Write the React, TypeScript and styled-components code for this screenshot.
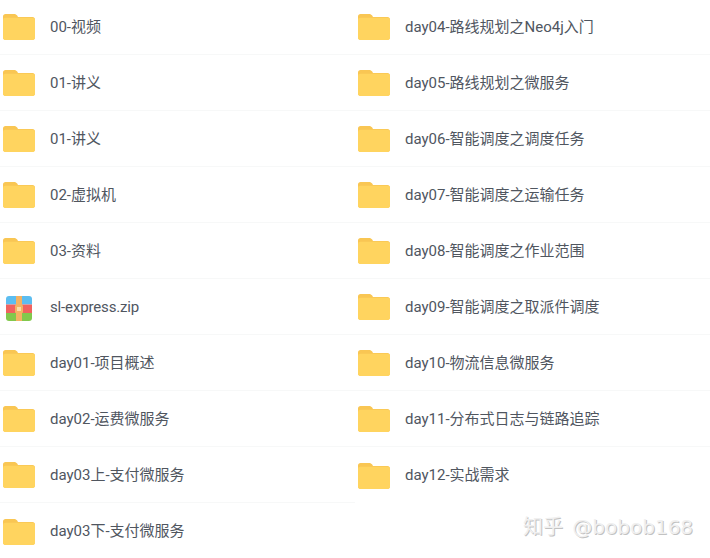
import React from "react";
import styled, { createGlobalStyle } from "styled-components";

const Global = createGlobalStyle`
  html, body { margin: 0; padding: 0; background: #fff; }
  body { width: 710px; height: 558px; overflow: hidden; font-family: Roboto, "Noto Sans CJK SC", sans-serif; }
`;
const Page = styled.div`
  position: relative;
  width: 710px;
  height: 558px;
  display: grid;
  grid-template-columns: 355px 355px;
  background: #fff;
`;
const Column = styled.div`
  display: flex;
  flex-direction: column;
`;
const Row = styled.div`
  height: 55px;
  margin-bottom: 1px;
  box-sizing: border-box;
  display: flex;
  align-items: center;
  border-bottom: 1px solid #f7f8f8;
  padding: 0 0 1px 3px;
  &:last-child { border-bottom: none; }
`;
const IconSlot = styled.div`
  width: 32px;
  height: 27px;
  flex: none;
  margin-right: 15px;
  & > svg { display: block; }
`;
const Label = styled.span<{ $tight?: boolean }>`
  font-size: 15px;
  line-height: 20px;
  color: #50565f;
  white-space: nowrap;
  letter-spacing: ${(p) => (p.$tight ? "-0.15px" : "0")};
`;
const Watermark = styled.div`
  position: absolute;
  left: 523px;
  top: 513px;
  font-size: 20px;
  line-height: 28px;
  word-spacing: 3px;
  font-family: "DejaVu Sans", "Noto Sans CJK SC", sans-serif;
  color: #f0f0f0;
  text-shadow: 1px 1px 0 #c2c2c2;
  white-space: nowrap;
`;

const Folder = () => (
  <svg width="32" height="27" viewBox="0 0 32 27">
    <path d="M0 3.500C0 2 1 1 2.500 1H11c1.500 0 2.400.5 3.200 1.600L15 4h14.500C31 4 32 5 32 6.500V24.500C32 26 31 27 29.500 27H2.500C1 27 0 26 0 24.500Z" fill="#f9c653" />
    <path d="M0 7C0 5.500 1 4.800 2.500 4.800H29.500C31 4.800 32 5.800 32 7V24.500C32 26 31 27 29.500 27H2.500C1 27 0 26 0 24.500Z" fill="#ffd45f" />
  </svg>
);
const Zip = () => (
  <svg width="32" height="28" viewBox="0 0 32 28">
    <g transform="translate(3 3)">
      <path d="M0 8.500V3a3 3 0 0 1 3-3h20a3 3 0 0 1 3 3v5.500Z" fill="#5cbdf0" />
      <rect x="0" y="8.500" width="26" height="8.500" fill="#f0625f" />
      <path d="M0 17h26v5a3 3 0 0 1-3 3H3a3 3 0 0 1-3-3Z" fill="#82c84c" />
      <rect x="10" y="0" width="6" height="25" fill="#f3b262" />
      <rect x="9" y="9" width="8" height="8" rx="1" fill="#f3b262" />
      <rect x="11" y="11" width="4" height="4" fill="#fbdca8" />
    </g>
  </svg>
);

const left = ["00-视频","01-讲义","01-讲义","02-虚拟机","03-资料","sl-express.zip","day01-项目概述","day02-运费微服务","day03上-支付微服务","day03下-支付微服务"];
const right = ["day04-路线规划之Neo4j入门","day05-路线规划之微服务","day06-智能调度之调度任务","day07-智能调度之运输任务","day08-智能调度之作业范围","day09-智能调度之取派件调度","day10-物流信息微服务","day11-分布式日志与链路追踪","day12-实战需求"];

const renderRow = (name: string, i: number) => {
  const isZip = name.endsWith(".zip");
  return (
    <Row key={i}>
      <IconSlot>{isZip ? <Zip /> : <Folder />}</IconSlot>
      <Label $tight={isZip}>{name}</Label>
    </Row>
  );
};

export default function App() {
  return (
    <Page>
      <Global />
      <Column>{left.map(renderRow)}</Column>
      <Column>{right.map(renderRow)}</Column>
      <Watermark>知乎 @bobob168</Watermark>
    </Page>
  );
}
